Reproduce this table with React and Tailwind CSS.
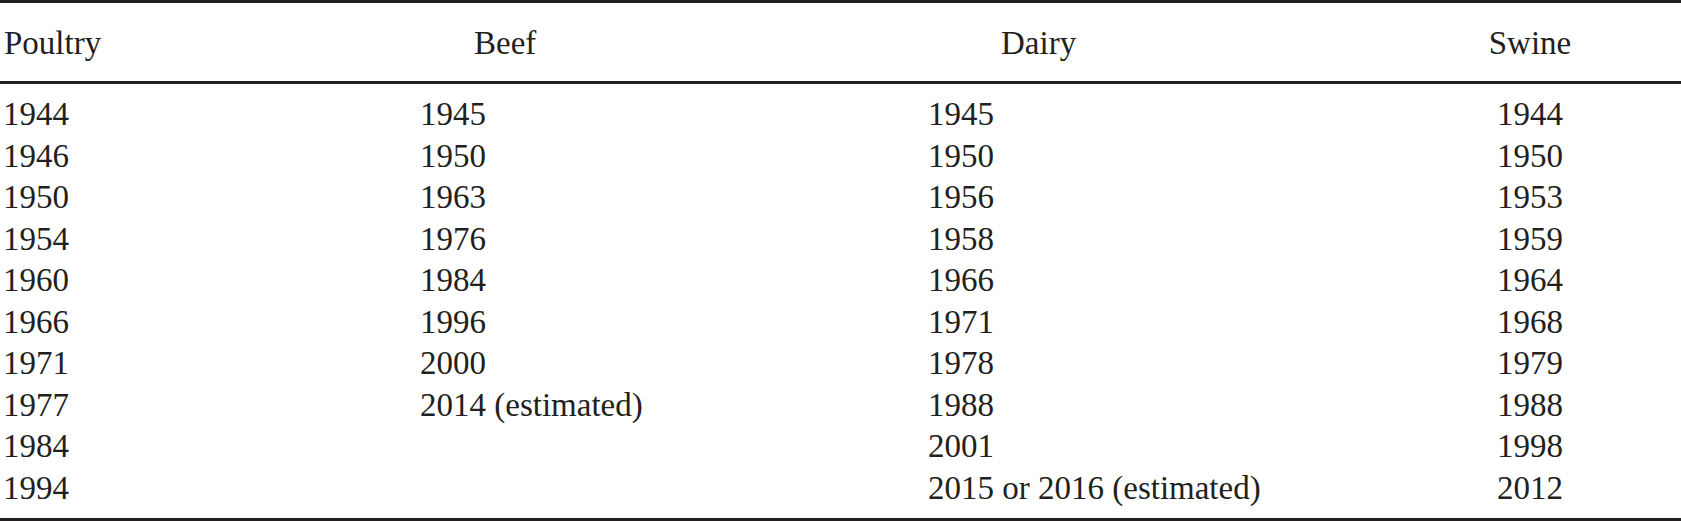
import React from "react";

const rows = [
  ["1944", "1945", "1945", "1944"],
  ["1946", "1950", "1950", "1950"],
  ["1950", "1963", "1956", "1953"],
  ["1954", "1976", "1958", "1959"],
  ["1960", "1984", "1966", "1964"],
  ["1966", "1996", "1971", "1968"],
  ["1971", "2000", "1978", "1979"],
  ["1977", "2014 (estimated)", "1988", "1988"],
  ["1984", "", "2001", "1998"],
  ["1994", "", "2015 or 2016 (estimated)", "2012"],
];

export default function App() {
  return (
    <div
      className="w-[1681px] h-[521px] bg-white text-[#231f20] text-[33px] leading-[41.5px]"
      style={{ fontFamily: '"Liberation Serif", "Times New Roman", serif' }}
    >
      <div className="border-t-[3px] border-b-[3px] border-[#231f20] pt-[20px] pb-[16.5px] grid grid-cols-[420px_508px_451px_302px]">
        <div className="pl-[4px]">Poultry</div>
        <div className="pl-[54px]">Beef</div>
        <div className="pl-[73px]">Dairy</div>
        <div className="text-center">Swine</div>
      </div>
      <div className="border-b-[3px] border-[#231f20] pt-[10px] pb-[9px] grid grid-cols-[420px_508px_451px_302px]">
        {rows.map((r, i) => (
          <React.Fragment key={i}>
            <div className="pl-[3px] h-[41.5px] whitespace-nowrap">{r[0]}</div>
            <div className="h-[41.5px] whitespace-nowrap">{r[1]}</div>
            <div className="h-[41.5px] whitespace-nowrap">{r[2]}</div>
            <div className="h-[41.5px] text-center whitespace-nowrap">{r[3]}</div>
          </React.Fragment>
        ))}
      </div>
    </div>
  );
}
